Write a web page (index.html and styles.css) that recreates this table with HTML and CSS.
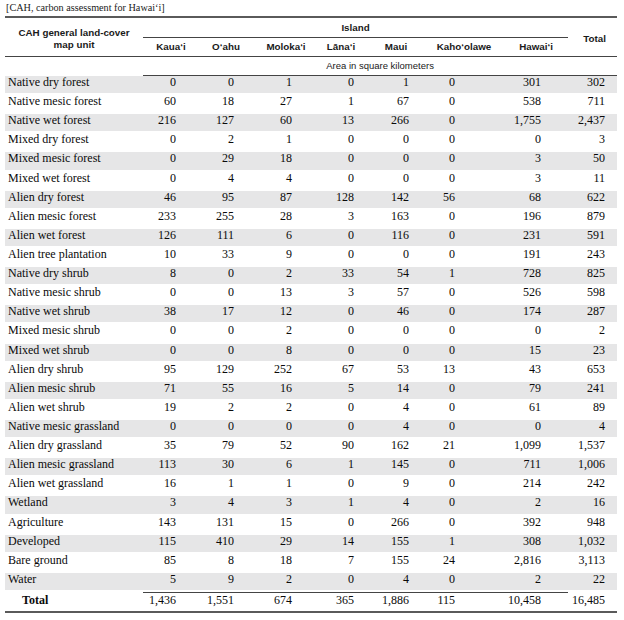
FILE: index.html
```html
<!DOCTYPE html>
<html lang="en">
<head>
<meta charset="utf-8">
<title>CAH land-cover area by island</title>
<link rel="stylesheet" href="styles.css">
</head>
<body>
<div class="page">
  <div class="caption">[CAH, carbon assessment for Hawai‘i]</div>
  <table class="t">
    <colgroup>
      <col class="c-label"><col class="c-kauai"><col class="c-oahu"><col class="c-molokai"><col class="c-lanai"><col class="c-maui"><col class="c-kaho"><col class="c-hawaii"><col class="c-total">
    </colgroup>
    <thead>
      <tr class="r1">
        <th rowspan="2" class="h-unit">CAH general land-cover<br>map unit</th>
        <th colspan="7" class="h-island">Island</th>
        <th rowspan="2" class="h-total">Total</th>
      </tr>
      <tr class="r2">
        <th>Kaua‘i</th><th>O‘ahu</th><th>Moloka‘i</th><th>Lāna‘i</th><th>Maui</th><th>Kaho‘olawe</th><th class="h-hawaii">Hawai‘i</th>
      </tr>
      <tr class="r3">
        <th class="h-blank"></th>
        <th colspan="8" class="h-area">Area in square kilometers</th>
      </tr>
    </thead>
    <tbody>
      <tr><td>Native dry forest</td><td>0</td><td>0</td><td>1</td><td>0</td><td>1</td><td>0</td><td>301</td><td>302</td></tr>
      <tr><td>Native mesic forest</td><td>60</td><td>18</td><td>27</td><td>1</td><td>67</td><td>0</td><td>538</td><td>711</td></tr>
      <tr><td>Native wet forest</td><td>216</td><td>127</td><td>60</td><td>13</td><td>266</td><td>0</td><td>1,755</td><td>2,437</td></tr>
      <tr><td>Mixed dry forest</td><td>0</td><td>2</td><td>1</td><td>0</td><td>0</td><td>0</td><td>0</td><td>3</td></tr>
      <tr><td>Mixed mesic forest</td><td>0</td><td>29</td><td>18</td><td>0</td><td>0</td><td>0</td><td>3</td><td>50</td></tr>
      <tr><td>Mixed wet forest</td><td>0</td><td>4</td><td>4</td><td>0</td><td>0</td><td>0</td><td>3</td><td>11</td></tr>
      <tr><td>Alien dry forest</td><td>46</td><td>95</td><td>87</td><td>128</td><td>142</td><td>56</td><td>68</td><td>622</td></tr>
      <tr><td>Alien mesic forest</td><td>233</td><td>255</td><td>28</td><td>3</td><td>163</td><td>0</td><td>196</td><td>879</td></tr>
      <tr><td>Alien wet forest</td><td>126</td><td>111</td><td>6</td><td>0</td><td>116</td><td>0</td><td>231</td><td>591</td></tr>
      <tr><td>Alien tree plantation</td><td>10</td><td>33</td><td>9</td><td>0</td><td>0</td><td>0</td><td>191</td><td>243</td></tr>
      <tr><td>Native dry shrub</td><td>8</td><td>0</td><td>2</td><td>33</td><td>54</td><td>1</td><td>728</td><td>825</td></tr>
      <tr><td>Native mesic shrub</td><td>0</td><td>0</td><td>13</td><td>3</td><td>57</td><td>0</td><td>526</td><td>598</td></tr>
      <tr><td>Native wet shrub</td><td>38</td><td>17</td><td>12</td><td>0</td><td>46</td><td>0</td><td>174</td><td>287</td></tr>
      <tr><td>Mixed mesic shrub</td><td>0</td><td>0</td><td>2</td><td>0</td><td>0</td><td>0</td><td>0</td><td>2</td></tr>
      <tr><td>Mixed wet shrub</td><td>0</td><td>0</td><td>8</td><td>0</td><td>0</td><td>0</td><td>15</td><td>23</td></tr>
      <tr><td>Alien dry shrub</td><td>95</td><td>129</td><td>252</td><td>67</td><td>53</td><td>13</td><td>43</td><td>653</td></tr>
      <tr><td>Alien mesic shrub</td><td>71</td><td>55</td><td>16</td><td>5</td><td>14</td><td>0</td><td>79</td><td>241</td></tr>
      <tr><td>Alien wet shrub</td><td>19</td><td>2</td><td>2</td><td>0</td><td>4</td><td>0</td><td>61</td><td>89</td></tr>
      <tr><td>Native mesic grassland</td><td>0</td><td>0</td><td>0</td><td>0</td><td>4</td><td>0</td><td>0</td><td>4</td></tr>
      <tr><td>Alien dry grassland</td><td>35</td><td>79</td><td>52</td><td>90</td><td>162</td><td>21</td><td>1,099</td><td>1,537</td></tr>
      <tr><td>Alien mesic grassland</td><td>113</td><td>30</td><td>6</td><td>1</td><td>145</td><td>0</td><td>711</td><td>1,006</td></tr>
      <tr><td>Alien wet grassland</td><td>16</td><td>1</td><td>1</td><td>0</td><td>9</td><td>0</td><td>214</td><td>242</td></tr>
      <tr><td>Wetland</td><td>3</td><td>4</td><td>3</td><td>1</td><td>4</td><td>0</td><td>2</td><td>16</td></tr>
      <tr><td>Agriculture</td><td>143</td><td>131</td><td>15</td><td>0</td><td>266</td><td>0</td><td>392</td><td>948</td></tr>
      <tr><td>Developed</td><td>115</td><td>410</td><td>29</td><td>14</td><td>155</td><td>1</td><td>308</td><td>1,032</td></tr>
      <tr><td>Bare ground</td><td>85</td><td>8</td><td>18</td><td>7</td><td>155</td><td>24</td><td>2,816</td><td>3,113</td></tr>
      <tr><td>Water</td><td>5</td><td>9</td><td>2</td><td>0</td><td>4</td><td>0</td><td>2</td><td>22</td></tr>
    </tbody>
    <tfoot>
      <tr><td>Total</td><td>1,436</td><td>1,551</td><td>674</td><td>365</td><td>1,886</td><td>115</td><td>10,458</td><td>16,485</td></tr>
    </tfoot>
  </table>
</div>
</body>
</html>
```

FILE: styles.css
```css
html, body {
  margin: 0;
  padding: 0;
  background: #ffffff;
}

.page {
  width: 612px;
  padding: 0 5px;
}

.caption {
  height: 16px;
  padding-left: 1px;
  font-family: "Liberation Serif", "Times New Roman", serif;
  font-size: 10.2px;
  line-height: 16px;
  color: #1a1a1a;
}

.t {
  width: 612px;
  table-layout: fixed;
  border-collapse: separate;
  border-spacing: 0;
  border-top: 2px solid #5a5a5a;
  border-bottom: 2px solid #5a5a5a;
  font-family: "Liberation Serif", "Times New Roman", serif;
  font-size: 12px;
  color: #0a0a0a;
}

.c-label { width: 138px; }
.c-kauai { width: 56px; }
.c-oahu { width: 54px; }
.c-molokai { width: 66px; }
.c-lanai { width: 44px; }
.c-maui { width: 66px; }
.c-kaho { width: 70px; }
.c-hawaii { width: 69px; }
.c-total { width: 49px; }

.t th {
  padding: 0;
  font-family: "Liberation Sans", Arial, sans-serif;
  font-size: 9.8px;
  font-weight: bold;
  line-height: 12px;
  text-align: center;
  vertical-align: middle;
  color: #1a1a1a;
  white-space: nowrap;
}

.r1 { height: 20px; }
.r2 { height: 19px; }
.r3 { height: 19px; }

.h-unit {
  padding-top: 3px !important;
  border-bottom: 1px solid #444;
}

.h-island {
  border-bottom: 1px solid #444;
}

.h-total {
  padding-top: 3px !important;
  padding-left: 4px !important;
  border-bottom: 1px solid #444;
}

.r2 th {
  border-bottom: 1px solid #444;
}

.r2 .h-hawaii {
  padding-left: 5px;
}

.t .h-area {
  font-weight: normal;
  font-size: 9.5px;
  border-bottom: 1px solid #444;
}

.t td {
  padding: 0;
  line-height: 13px;
  vertical-align: top;
  text-align: right;
  white-space: nowrap;
}

.t tbody tr {
  height: 19.111px;
}

.t tbody tr:nth-child(odd) td {
  background: #e6e6e7;
  box-shadow: inset 0 -2px 0 #ffffff;
}

.t td:nth-child(1) {
  text-align: left;
  padding-left: 3px;
}
.t td:nth-child(2) { padding-right: 23px; }
.t td:nth-child(3) { padding-right: 19px; }
.t td:nth-child(4) { padding-right: 27px; }
.t td:nth-child(5) { padding-right: 9px; }
.t td:nth-child(6) { padding-right: 20px; }
.t td:nth-child(7) { padding-right: 44px; }
.t td:nth-child(8) { padding-right: 27px; }
.t td:nth-child(9) { padding-right: 12px; }

.t tfoot tr {
  height: 19px;
}

.t tfoot td {
  padding-top: 1px;
  border-top: 1px solid transparent;
}

.t tfoot td:nth-child(n+2):nth-child(-n+8) {
  border-top-color: #444;
}

.t tfoot td:nth-child(1) {
  padding-left: 17px;
  font-weight: bold;
}
```
